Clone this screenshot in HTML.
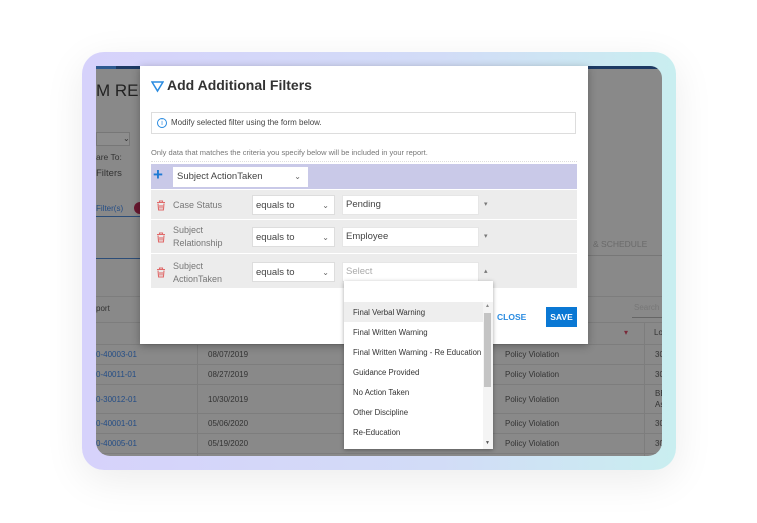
<!DOCTYPE html>
<html><head><style>
*{margin:0;padding:0;box-sizing:border-box}
body{width:757px;height:523px;background:#fff;font-family:"Liberation Sans",sans-serif;position:relative;overflow:hidden}
.a{position:absolute}
.frame{left:82px;top:52px;width:594px;height:418px;border-radius:22px;background:linear-gradient(90deg,#d6d2fb 0%,#d2dcf7 60%,#c9eef0 100%);box-shadow:0 10px 40px rgba(0,0,0,.08)}
.scr{left:96px;top:66px;width:566px;height:390px;border-radius:0 12px 14px 14px;background:#898989;overflow:hidden}
.t{position:absolute;font-size:8px;color:#333;white-space:nowrap}
.l{color:#244d86}
.hl{position:absolute;left:0;width:566px;height:1px;background:#7d7d7d}
.modal{left:140px;top:66px;width:448px;height:278px;background:#fff;box-shadow:0 2px 8px rgba(0,0,0,.3)}
.m{position:absolute;white-space:nowrap}
.row{position:absolute;left:11px;width:426px;background:#ececec;border-bottom:1px solid #fff}
.sel{position:absolute;background:#fff;border:1px solid #ddd;font-size:9.5px;color:#444;padding-left:3px}
.lab{position:absolute;font-size:9px;color:#777;line-height:12.5px}
.dd{left:344px;top:281px;width:149px;height:168px;background:#fff;box-shadow:0 1px 4px rgba(0,0,0,.35)}
.it{position:absolute;left:0;width:139px;height:20px;font-size:7.8px;color:#333;padding:6px 0 0 9px}
</style></head><body>
<div class="a frame"></div>
<div class="a scr">
  <div class="a" style="left:0;top:0;width:566px;height:3px;background:#1d3a63"></div>
  <div class="a" style="left:0;top:0;width:20px;height:3px;background:#2e5a90"></div>
  <div class="t" style="left:0;top:15px;font-size:17px;color:#222">M REP</div>
  <div class="a" style="left:0;top:66px;width:34px;height:14px;border:1px solid #777;background:#8d8d8d"></div>
  <div class="t" style="left:27px;top:68px">⌄</div>
  <div class="t" style="left:0;top:86px;font-size:8.5px">are To:</div>
  <div class="t" style="left:0;top:102px;font-size:9.5px">Filters</div>
  <div class="t l" style="left:0;top:138px;font-size:8px">Filter(s)</div>
  <div class="a" style="left:38px;top:136px;width:8px;height:12px;border-radius:6px 0 0 6px;background:#6a1830"></div>
  <div class="a" style="left:0;top:150px;width:44px;height:1px;background:#2c4d78"></div>
  <div class="a" style="left:0;top:192px;width:44px;height:1px;background:#2c4d78"></div>
  <div class="t" style="left:497px;top:173px;font-size:8.5px;color:#6a6a6a">&amp; SCHEDULE</div>
  <div class="a" style="left:480px;top:189px;width:86px;height:1px;background:#777"></div>
  <div class="hl" style="top:230px"></div>
  <div class="t" style="left:0;top:238px">port</div>
  <div class="t" style="left:538px;top:237px;color:#777">Search</div>
  <div class="a" style="left:536px;top:251px;width:30px;height:1px;background:#666"></div>
  <div class="hl" style="top:256px"></div>
  <div class="t" style="left:528px;top:262px;color:#7a2a3a">▾</div>
  <div class="t" style="left:558px;top:262px">Lo</div>
  <div class="a" style="left:548px;top:256px;width:1px;height:134px;background:#7d7d7d"></div>
  <div class="a" style="left:101px;top:256px;width:1px;height:134px;background:#7d7d7d"></div>
  <div class="hl" style="top:278px"></div><div class="hl" style="top:298px"></div><div class="hl" style="top:318px"></div><div class="hl" style="top:347px"></div><div class="hl" style="top:367px"></div><div class="hl" style="top:387px"></div>
  <div class="t l" style="left:0;top:284px">0-40003-01</div><div class="t" style="left:112px;top:284px">08/07/2019</div><div class="t" style="left:409px;top:284px">Policy Violation</div><div class="t" style="left:559px;top:284px">30</div>
  <div class="t l" style="left:0;top:304px">0-40011-01</div><div class="t" style="left:112px;top:304px">08/27/2019</div><div class="t" style="left:409px;top:304px">Policy Violation</div><div class="t" style="left:559px;top:304px">30</div>
  <div class="t l" style="left:0;top:329px">0-30012-01</div><div class="t" style="left:112px;top:329px">10/30/2019</div><div class="t" style="left:409px;top:329px">Policy Violation</div><div class="t" style="left:559px;top:323px">BE</div><div class="t" style="left:559px;top:334px">As</div>
  <div class="t l" style="left:0;top:353px">0-40001-01</div><div class="t" style="left:112px;top:353px">05/06/2020</div><div class="t" style="left:409px;top:353px">Policy Violation</div><div class="t" style="left:559px;top:353px">30</div>
  <div class="t l" style="left:0;top:373px">0-40005-01</div><div class="t" style="left:112px;top:373px">05/19/2020</div><div class="t" style="left:409px;top:373px">Policy Violation</div><div class="t" style="left:559px;top:373px">30</div>
</div>

<div class="a modal">
  <svg class="m" style="left:11px;top:14px" width="13" height="13" viewBox="0 0 13 13"><path d="M1 2 H12 L6.5 11 Z" fill="none" stroke="#2a8be0" stroke-width="1.5"/></svg>
  <div class="m" style="left:27px;top:11px;font-size:14px;font-weight:bold;color:#333">Add Additional Filters</div>
  <div class="m" style="left:11px;top:46px;width:425px;height:22px;border:1px solid #ddd"></div>
  <div class="m" style="left:17px;top:52px;width:10px;height:10px;border:1px solid #2a8be0;border-radius:50%;font-size:7px;color:#2a8be0;text-align:center;line-height:9px">i</div>
  <div class="m" style="left:31px;top:52px;font-size:8px;color:#444">Modify selected filter using the form below.</div>
  <div class="m" style="left:11px;top:82px;font-size:7.5px;color:#777">Only data that matches the criteria you specify below will be included in your report.</div>
  <div class="m" style="left:11px;top:95px;width:426px;border-top:1px dotted #ddd"></div>
  <div class="row" style="top:98px;height:26px;background:#c9c9e8"></div>
  <div class="m" style="left:13px;top:99px;font-size:17px;font-weight:bold;color:#1e7ad4">+</div>
  <div class="sel" style="left:33px;top:101px;width:135px;height:20px;line-height:18px;border-color:#fff">Subject ActionTaken<span style="position:absolute;right:6px;font-size:8px;color:#666">⌄</span></div>

  <div class="row" style="top:124px;height:30px"></div>
  <div class="row" style="top:154px;height:34px"></div>
  <div class="row" style="top:188px;height:35px"></div>

  <svg class="m" style="left:16px;top:134px" width="10" height="11" viewBox="0 0 10 11"><path d="M1 2.5H9M3.5 2.5V1H6.5V2.5M2 3.5L2.6 10H7.4L8 3.5M4 5V8.5M6 5V8.5" fill="none" stroke="#e06a6a" stroke-width="1.1"/></svg>
  <div class="lab" style="left:33px;top:133px">Case Status</div>
  <div class="sel" style="left:112px;top:129px;width:83px;height:20px;line-height:19px">equals to<span style="position:absolute;right:5px;font-size:8px;color:#666">⌄</span></div>
  <div class="sel" style="left:202px;top:129px;width:137px;height:20px;line-height:17px;border-color:#e6e6e6">Pending</div>
  <div class="m" style="left:344px;top:134px;font-size:7px;color:#777">▾</div>

  <svg class="m" style="left:16px;top:166px" width="10" height="11" viewBox="0 0 10 11"><path d="M1 2.5H9M3.5 2.5V1H6.5V2.5M2 3.5L2.6 10H7.4L8 3.5M4 5V8.5M6 5V8.5" fill="none" stroke="#e06a6a" stroke-width="1.1"/></svg>
  <div class="lab" style="left:33px;top:158px">Subject<br>Relationship</div>
  <div class="sel" style="left:112px;top:161px;width:83px;height:20px;line-height:19px">equals to<span style="position:absolute;right:5px;font-size:8px;color:#666">⌄</span></div>
  <div class="sel" style="left:202px;top:161px;width:137px;height:20px;line-height:17px;border-color:#e6e6e6">Employee</div>
  <div class="m" style="left:344px;top:166px;font-size:7px;color:#777">▾</div>

  <svg class="m" style="left:16px;top:201px" width="10" height="11" viewBox="0 0 10 11"><path d="M1 2.5H9M3.5 2.5V1H6.5V2.5M2 3.5L2.6 10H7.4L8 3.5M4 5V8.5M6 5V8.5" fill="none" stroke="#e06a6a" stroke-width="1.1"/></svg>
  <div class="lab" style="left:33px;top:194px">Subject<br>ActionTaken</div>
  <div class="sel" style="left:112px;top:196px;width:83px;height:20px;line-height:19px">equals to<span style="position:absolute;right:5px;font-size:8px;color:#666">⌄</span></div>
  <div class="sel" style="left:202px;top:196px;width:137px;height:20px;line-height:17px;border-color:#e6e6e6;color:#aaa">Select</div>
  <div class="m" style="left:344px;top:201px;font-size:7px;color:#777">▴</div>

  <div class="m" style="left:357px;top:246px;font-size:8.5px;font-weight:bold;color:#2a8be0">CLOSE</div>
  <div class="m" style="left:406px;top:241px;width:31px;height:20px;background:#0a78d4;color:#fff;font-size:8.5px;font-weight:bold;text-align:center;line-height:20px">SAVE</div>
</div>

<div class="a dd">
  <div class="it" style="top:21px;background:#eee">Final Verbal Warning</div>
  <div class="it" style="top:41px">Final Written Warning</div>
  <div class="it" style="top:61px">Final Written Warning - Re Education</div>
  <div class="it" style="top:81px">Guidance Provided</div>
  <div class="it" style="top:101px">No Action Taken</div>
  <div class="it" style="top:121px">Other Discipline</div>
  <div class="it" style="top:141px">Re-Education</div>
  <div class="a" style="left:139px;top:21px;width:10px;height:147px;background:#f4f4f4"></div>
  <div class="a" style="left:140px;top:32px;width:7px;height:74px;background:#c4c4c4"></div>
  <div class="a" style="left:141px;top:22px;font-size:5px;color:#888">▲</div>
  <div class="a" style="left:141px;top:159px;font-size:5px;color:#555">▼</div>
</div>
</body></html>
